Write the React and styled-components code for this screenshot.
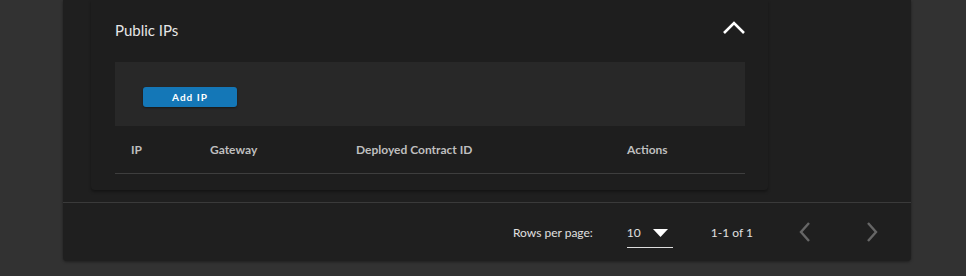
import styled, { createGlobalStyle } from "styled-components";

const GlobalStyle = createGlobalStyle`
    body {
        margin: 0;
        background: #323232;
        font-family: "Lato", "Liberation Sans", sans-serif;
    }
`

const columns = ["IP", "Gateway", "Deployed Contract ID", "Actions"];

function ChevronUp() {
    return (
        <svg width="24" height="16" viewBox="0 0 24 16">
            <path d="M2 13 L12 3 L22 13" fill="none" stroke="#fff" strokeWidth="2.6" />
        </svg>
    )
}

function Chevron({ dir }) {
    const d = dir === "left" ? "M11 2 L3 11 L11 20" : "M3 2 L11 11 L3 20";
    return (
        <svg width="14" height="22" viewBox="0 0 14 22">
            <path d={d} fill="none" stroke="#666" strokeWidth="2.4" />
        </svg>
    )
}

function App() {
    return (
        <>
            <GlobalStyle />
            <Page>
                <Card>
                    <Panel>
                        <PanelHeader>
                            <Title>Public IPs</Title>
                            <ChevronUp />
                        </PanelHeader>
                        <Toolbar>
                            <AddButton>Add IP</AddButton>
                        </Toolbar>
                        <HeadRow>
                            {columns.map(c => <HeadCell key={c}>{c}</HeadCell>)}
                        </HeadRow>
                    </Panel>
                    <Footer>
                        <FooterText>Rows per page:</FooterText>
                        <Select>
                            <span>10</span>
                            <svg width="15" height="10" viewBox="0 0 15 10">
                                <path d="M0 1 L15 1 L7.5 9 Z" fill="#fff" />
                            </svg>
                        </Select>
                        <FooterText>1-1 of 1</FooterText>
                        <NavButtons>
                            <Chevron dir="left" />
                            <Chevron dir="right" />
                        </NavButtons>
                    </Footer>
                </Card>
            </Page>
        </>
    )
}

const Page = styled.div`
    padding: 0 55px 14px 63px;
`
const Card = styled.div`
    background: #1f1f1f;
    border-radius: 0 0 4px 4px;
    box-shadow: 0 1px 3px rgba(0,0,0,0.4);
`
const Panel = styled.div`
    margin: 0 143px 0 28px;
    padding: 0 23px 16px 24px;
    background: #1e1e1e;
    border-radius: 0 0 4px 4px;
    box-shadow: 0 2px 3px rgba(0,0,0,0.35);
`
const PanelHeader = styled.div`
    display: flex;
    align-items: center;
    justify-content: space-between;
    height: 62px;
    padding-bottom: 2px;
    box-sizing: border-box;
    svg { margin-right: -1px; margin-top: -4px; }
`
const Title = styled.div`
    font-size: 15px;
    color: #e6e6e6;
`
const Toolbar = styled.div`
    background: #282828;
    height: 64px;
    padding: 23px 28px 0;
    box-sizing: border-box;
`
const AddButton = styled.button`
    width: 94px;
    height: 20px;
    border: none;
    border-radius: 3px;
    background: #1477b7;
    color: #fff;
    font-family: "Lato", sans-serif;
    font-weight: 700;
    font-size: 10px;
    letter-spacing: 1px;
    box-shadow: 0 1px 2px rgba(0,0,0,0.4);
`
const HeadRow = styled.div`
    display: grid;
    grid-template-columns: 79px 146px 271px 1fr;
    height: 47px;
    align-items: center;
    border-bottom: 1px solid #3e3e3e;
`
const HeadCell = styled.div`
    padding-left: 16px;
    padding-bottom: 1px;
    font-size: 12px;
    font-weight: 700;
    color: #bfbfbf;
`
const Footer = styled.div`
    margin-top: 12px;
    border-top: 1px solid #3a3a3a;
    height: 58px;
    display: flex;
    align-items: center;
    justify-content: flex-end;
    padding-right: 32px;
`
const FooterText = styled.span`
    font-size: 12px;
    color: #e0e0e0;
    margin-right: 34px;
`
const Select = styled.div`
    display: flex;
    align-items: center;
    gap: 12px;
    width: 46px;
    height: 26px;
    margin-top: 6px;
    margin-right: 38px;
    border-bottom: 1px solid #ddd;
    font-size: 12px;
    color: #e0e0e0;
    box-sizing: border-box;
    padding-bottom: 4px;
`
const NavButtons = styled.div`
    display: flex;
    gap: 53px;
    margin-left: 11px;
`

export default App;
